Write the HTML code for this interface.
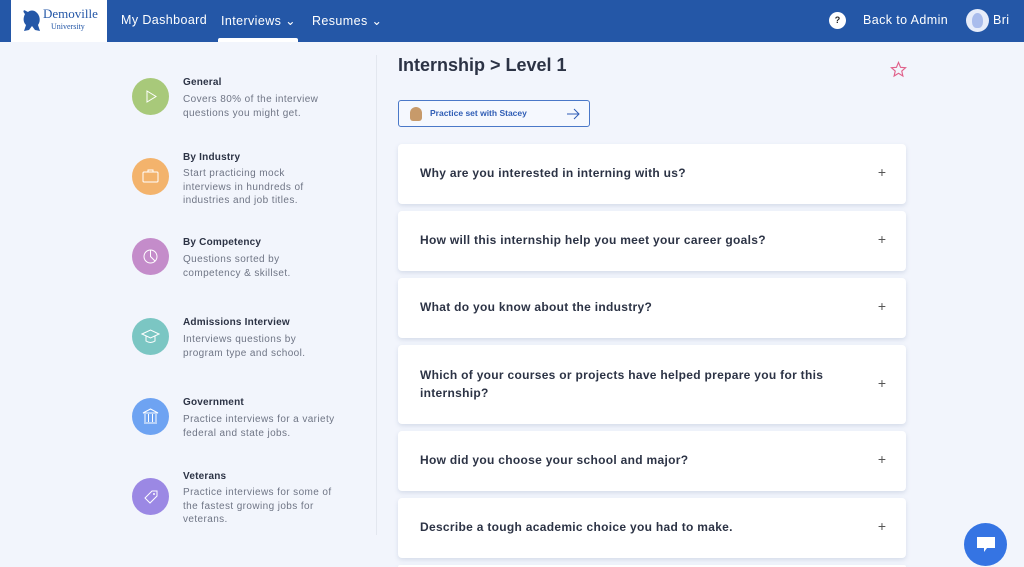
<!DOCTYPE html>
<html><head><meta charset="utf-8"><style>
*{margin:0;padding:0;box-sizing:border-box}
html,body{width:1024px;height:567px;overflow:hidden}
body{background:#f2f5fc;font-family:"Liberation Sans",sans-serif;position:relative}
.nav{position:absolute;left:0;top:0;width:1024px;height:42px;background:#2457a7}
.logo{position:absolute;left:11px;top:0;width:96px;height:42px;background:#fff}
.nav .l{position:absolute;top:13px;color:#fff;font-size:12.5px;letter-spacing:.4px}
.tab{position:absolute;left:218px;top:38px;width:80px;height:4px;background:#fff;border-radius:2px 2px 0 0}
.div{position:absolute;left:376px;top:55px;width:1px;height:480px;background:#e3e7ef}
.it{position:absolute;left:132px}
.it .c{position:absolute;left:0;top:0;width:37px;height:37px;border-radius:50%}
.it .c svg{position:absolute;left:9px;top:9px}
.it h4{position:absolute;left:51px;top:-1px;font-size:10px;color:#2c3345;white-space:nowrap;letter-spacing:.2px}
.it p{position:absolute;left:51px;top:15px;width:190px;white-space:nowrap;font-size:10px;line-height:13.5px;color:#6f7585;letter-spacing:.4px}
h1{position:absolute;left:398px;top:55px;font-size:18px;font-weight:bold;color:#2c3345}
.btn{position:absolute;left:398px;top:100px;width:192px;height:27px;border:1px solid #4a78c8;border-radius:3px;background:#f5f8fe}
.btn span{position:absolute;left:31px;top:7px;font-size:8.5px;color:#2f5db5;font-weight:bold}
.card{position:absolute;left:398px;width:508px;background:#fff;border-radius:4px;box-shadow:0 2px 4px rgba(150,165,195,.3)}
.card span{position:absolute;left:22px;font-size:12px;letter-spacing:.3px;font-weight:bold;color:#2c3345;line-height:18px;width:430px}
.card b{position:absolute;right:20px;font-weight:normal;font-size:14px;color:#555}
</style></head><body>
<div class="nav">
<div class="logo">
<svg width="20" height="24" style="position:absolute;left:11px;top:9px" viewBox="0 0 20 24"><path d="M4 2 C2 0 0 2 3 5 C1 9 1 13 4 16 L2 22 L7 21 L10 17 L13 21 L18 22 L16 16 C19 12 18 6 14 3 C12 1 8 1 6 3 Z" fill="#2457a7"/></svg>
<div style="position:absolute;left:32px;top:7px;font-family:'Liberation Serif',serif;color:#2457a7;font-size:13px;line-height:13px">Demoville</div>
<div style="position:absolute;left:40px;top:22px;font-family:'Liberation Serif',serif;color:#2457a7;font-size:8px">University</div>
</div>
<div class="l" style="left:121px">My Dashboard</div>
<div class="l" style="left:221px">Interviews ⌄</div>
<div class="l" style="left:312px">Resumes ⌄</div>
<div style="position:absolute;left:829px;top:12px;width:17px;height:17px;border-radius:50%;background:#fff;color:#222;font-size:9px;font-weight:bold;text-align:center;line-height:17px">?</div>
<div class="l" style="left:863px">Back to Admin</div>
<div style="position:absolute;left:966px;top:9px;width:23px;height:23px;border-radius:50%;background:#e6ecfa"><div style="margin:4px auto 0;width:11px;height:15px;border-radius:50% 50% 40% 40%;background:#a9bcec"></div></div>
<div class="l" style="left:993px">Bri</div>
<div class="tab"></div>
</div>
<div class="div"></div>

<div class="it" style="top:78px"><div class="c" style="background:#a8c97a"><svg width="19" height="19"><path d="M6 4 L15 9.5 L6 15 Z" fill="none" stroke="#fff" stroke-width="1"/></svg></div><h4>General</h4><p>Covers 80% of the interview<br>questions you might get.</p></div>
<div class="it" style="top:158px"><div class="c" style="background:#f3b36c"><svg width="19" height="19"><rect x="2" y="5" width="15" height="10" rx="1" fill="none" stroke="#fff"/><path d="M7 5V3h5v2" fill="none" stroke="#fff"/></svg></div><h4 style="top:-6px">By Industry</h4><p style="top:9px">Start practicing mock<br>interviews in hundreds of<br>industries and job titles.</p></div>
<div class="it" style="top:238px"><div class="c" style="background:#c48cca"><svg width="19" height="19"><circle cx="9.5" cy="9.5" r="6.5" fill="none" stroke="#fff"/><path d="M9.5 3v6.5l4.5 4.5" fill="none" stroke="#fff"/></svg></div><h4 style="top:-1px">By Competency</h4><p>Questions sorted by<br>competency &amp; skillset.</p></div>
<div class="it" style="top:318px"><div class="c" style="background:#7bc6c3"><svg width="19" height="19"><path d="M1 7 L9.5 3 L18 7 L9.5 11 Z M5 9v5c3 2 6 2 9 0V9" fill="none" stroke="#fff"/></svg></div><h4>Admissions Interview</h4><p>Interviews questions by<br>program type and school.</p></div>
<div class="it" style="top:398px"><div class="c" style="background:#6ea3f2"><svg width="19" height="19"><path d="M2 6 L9.5 2 L17 6 Z M3 16h13 M4 7v8 M7.5 7v8 M11.5 7v8 M15 7v8" fill="none" stroke="#fff"/></svg></div><h4>Government</h4><p>Practice interviews for a variety<br>federal and state jobs.</p></div>
<div class="it" style="top:478px"><div class="c" style="background:#9b88e4"><svg width="19" height="19"><path d="M4 11 L11 4 L16 4 L16 9 L9 16 Z" fill="none" stroke="#fff"/><circle cx="13" cy="7" r="1" fill="#fff"/></svg></div><h4 style="top:-7px">Veterans</h4><p style="top:8px">Practice interviews for some of<br>the fastest growing jobs for<br>veterans.</p></div>

<h1>Internship &gt; Level 1</h1>
<svg style="position:absolute;left:890px;top:61px" width="17" height="17" viewBox="0 0 24 24"><path d="M12 2l2.9 6.9 7.1.6-5.4 4.7 1.6 7-6.2-3.8-6.2 3.8 1.6-7L2 9.5l7.1-.6z" fill="none" stroke="#e0608a" stroke-width="1.6"/></svg>
<div class="btn"><div style="position:absolute;left:11px;top:6px;width:12px;height:14px;border-radius:6px 6px 3px 3px;background:#c79a6a"></div><span>Practice set with Stacey</span><svg style="position:absolute;left:167px;top:7px" width="14" height="12"><path d="M1 6h12M8 1l5 5-5 5" fill="none" stroke="#2f5db5"/></svg></div>

<div class="card" style="top:144px;height:60px"><span style="top:20px">Why are you interested in interning with us?</span><b style="top:20px">+</b></div>
<div class="card" style="top:211px;height:60px"><span style="top:20px">How will this internship help you meet your career goals?</span><b style="top:20px">+</b></div>
<div class="card" style="top:278px;height:60px"><span style="top:20px">What do you know about the industry?</span><b style="top:20px">+</b></div>
<div class="card" style="top:345px;height:79px"><span style="top:21px">Which of your courses or projects have helped prepare you for this internship?</span><b style="top:30px">+</b></div>
<div class="card" style="top:431px;height:60px"><span style="top:20px">How did you choose your school and major?</span><b style="top:20px">+</b></div>
<div class="card" style="top:498px;height:60px"><span style="top:20px">Describe a tough academic choice you had to make.</span><b style="top:20px">+</b></div>
<div class="card" style="top:565px;height:2px;border-radius:4px 4px 0 0"></div>

<div style="position:absolute;left:964px;top:523px;width:43px;height:43px;border-radius:50%;background:#3574e3"><svg style="position:absolute;left:12px;top:13px" width="20" height="18"><path d="M1 1h18v11H11l-3 4v-4H1z" fill="#fff"/></svg></div>
</body></html>
